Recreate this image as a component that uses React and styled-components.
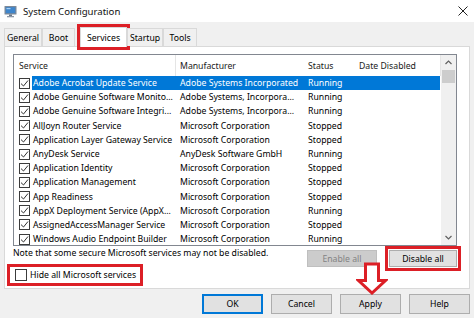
import React from "react";
import styled, { createGlobalStyle } from "styled-components";

const Global = createGlobalStyle`
  html, body { margin: 0; padding: 0; }
  body {
    width: 474px;
    height: 318px;
    overflow: hidden;
    background: #f0f0f0;
    font-family: "Noto Sans", "Open Sans", sans-serif;
  }
`;

const Window = styled.div`
  position: relative;
  width: 474px;
  height: 318px;
  background: #f0f0f0;
  color: #000;
  font-size: 8.7px;
  display: flex;
  flex-direction: column;
`;

const TitleBar = styled.div`
  height: 22px;
  background: #fff;
  display: flex;
  align-items: center;
  padding: 0 6px 0 4px;
  gap: 6px;
`;

const Title = styled.div`
  flex: 1;
  font-size: 9.6px;
  color: #111;
`;

const Body = styled.div`
  padding: 0 4px;
  display: flex;
  flex-direction: column;
`;

const TabStrip = styled.div`
  height: 24px;
  display: flex;
  align-items: flex-end;
  position: relative;
  z-index: 2;
`;

const Tab = styled.div`
  box-sizing: border-box;
  width: ${p => p.w}px;
  margin-left: ${p => p.ml || 0}px;
  height: ${p => (p.active ? 20 : 18)}px;
  margin-bottom: ${p => (p.active ? -1 : 0)}px;
  background: ${p => (p.active ? "#fff" : "#f0f0f0")};
  border: 1px solid #d9d9d9;
  border-bottom: none;
  display: flex;
  align-items: center;
  justify-content: center;
  padding-top: ${p => (p.active ? 0 : 1)}px;
  outline: ${p => (p.active ? "3px solid #dc1f26" : "none")};
`;

const Panel = styled.div`
  box-sizing: border-box;
  width: 466px;
  background: #fff;
  border: 1px solid #d9d9d9;
  padding: 7px 12px 5px 8px;
  display: flex;
  flex-direction: column;
`;

const ListBox = styled.div`
  box-sizing: border-box;
  width: 444px;
  height: 192px;
  border: 1px solid #828790;
  display: flex;
`;

const Table = styled.div`
  flex: 1;
  display: flex;
  flex-direction: column;
  overflow: hidden;
`;

const HeaderRow = styled.div`
  height: 21px;
  display: grid;
  grid-template-columns: 162px 129px 50px 86px;
`;

const HeaderCell = styled.div`
  display: flex;
  align-items: center;
  padding-left: ${p => p.pl}px;
  border-right: 1px solid ${p => (p.sep ? "#e5e5e5" : "transparent")};
  color: #1a1a1a;
`;

const Rows = styled.div`
  height: 169px;
  overflow: hidden;
`;

const Row = styled.div`
  height: 14.2px;
  display: flex;
  align-items: stretch;
`;

const CheckCell = styled.div`
  width: 18px;
  padding-left: 5px;
  box-sizing: border-box;
  display: flex;
  align-items: center;
`;

const RowBody = styled.div`
  width: 408px;
  display: grid;
  grid-template-columns: 144px 129px 50px 85px;
  background: ${p => (p.selected ? "#0078d7" : "transparent")};
  color: ${p => (p.selected ? "#fff" : "#000")};
`;

const Cell = styled.div`
  display: flex;
  align-items: center;
  padding-left: ${p => p.pl}px;
  white-space: nowrap;
  overflow: hidden;
`;

const Box = styled.div`
  box-sizing: border-box;
  width: ${p => p.size}px;
  height: ${p => p.size}px;
  border: 1px solid #3c3c3c;
  background: #fff;
  display: flex;
  align-items: center;
  justify-content: center;
  flex-shrink: 0;
`;

const ScrollBar = styled.div`
  width: 15px;
  background: #f0f0f0;
  display: flex;
  flex-direction: column;
`;

const ScrollArrow = styled.div`
  height: 15px;
  display: flex;
  align-items: center;
  justify-content: center;
`;

const Thumb = styled.div`
  height: 13px;
  margin: 0 1px;
  background: #cdcdcd;
`;

const Track = styled.div`
  flex: 1;
`;

const Footer = styled.div`
  display: flex;
  align-items: flex-start;
  margin-top: 1px;
`;

const Note = styled.div`
  flex: 1;
  line-height: 13px;
`;

const Button = styled.div`
  box-sizing: border-box;
  width: ${p => p.w}px;
  height: ${p => p.h}px;
  margin-left: ${p => p.ml || 0}px;
  margin-top: ${p => p.mt || 0}px;
  display: flex;
  align-items: center;
  justify-content: center;
  background: ${p => (p.disabled ? "#cccccc" : "#e1e1e1")};
  border: 1px solid ${p => (p.primary ? "#0078d7" : p.disabled ? "#bfbfbf" : "#adadad")};
  box-shadow: ${p => (p.primary ? "inset 0 0 0 1px #0078d7" : "none")};
  color: ${p => (p.disabled ? "#838383" : "#000")};
  outline: ${p => (p.marked ? "3px solid #dc1f26" : "none")};
  outline-offset: 1px;
`;

const HideRow = styled.div`
  align-self: flex-start;
  height: 16px;
  margin-left: -3px;
  padding: 0 4px 0 5px;
  display: flex;
  align-items: center;
  gap: 3px;
  white-space: nowrap;
  outline: 3px solid #dc1f26;
  box-sizing: border-box;
`;

const ButtonBar = styled.div`
  display: flex;
  justify-content: flex-end;
  gap: 8px;
  margin-top: 5px;
`;

const Arrow = styled.svg`
  position: absolute;
  left: 356px;
  top: 262px;
`;

const services = [
  ["Adobe Acrobat Update Service", "Adobe Systems Incorporated", "Running"],
  ["Adobe Genuine Software Monito...", "Adobe Systems, Incorpora...", "Running"],
  ["Adobe Genuine Software Integri...", "Adobe Systems, Incorpora...", "Running"],
  ["AllJoyn Router Service", "Microsoft Corporation", "Stopped"],
  ["Application Layer Gateway Service", "Microsoft Corporation", "Stopped"],
  ["AnyDesk Service", "AnyDesk Software GmbH", "Running"],
  ["Application Identity", "Microsoft Corporation", "Stopped"],
  ["Application Management", "Microsoft Corporation", "Stopped"],
  ["App Readiness", "Microsoft Corporation", "Stopped"],
  ["AppX Deployment Service (AppX...", "Microsoft Corporation", "Running"],
  ["AssignedAccessManager Service", "Microsoft Corporation", "Stopped"],
  ["Windows Audio Endpoint Builder", "Microsoft Corporation", "Running"],
];

const Check = () => (
  <svg width="9" height="9" viewBox="0 0 9 9">
    <path d="M1 4.6 L3.5 7 L8 1.5" fill="none" stroke="#333" strokeWidth="1" />
  </svg>
);

const AppIcon = () => (
  <svg width="13" height="13" viewBox="0 0 13 13">
    <rect x="0.5" y="1" width="12" height="8.5" rx="0.5" fill="#7d8a99" />
    <rect x="1.7" y="2.2" width="9.6" height="6" fill="#3f86cc" />
    <rect x="2.5" y="3" width="4" height="1.2" fill="#a9d1f5" />
    <rect x="5" y="9.5" width="3" height="1.5" fill="#6b7787" />
    <rect x="3" y="11" width="7" height="1.3" fill="#8d98a6" />
  </svg>
);

const CloseIcon = () => (
  <svg width="10" height="10" viewBox="0 0 10 10">
    <path d="M0.5 0.5 L9.5 9.5 M9.5 0.5 L0.5 9.5" stroke="#222" strokeWidth="1" />
  </svg>
);

const Chevron = ({ up }) => (
  <svg width="7" height="5" viewBox="0 0 7 5">
    <path d={up ? "M0.5 4 L3.5 1 L6.5 4" : "M0.5 1 L3.5 4 L6.5 1"} fill="none" stroke="#606060" strokeWidth="1.2" />
  </svg>
);

export default function App() {
  return (
    <Window>
      <Global />
      <TitleBar>
        <AppIcon />
        <Title>System Configuration</Title>
        <CloseIcon />
      </TitleBar>
      <Body>
        <TabStrip>
          <Tab w={38}>General</Tab>
          <Tab w={33}>Boot</Tab>
          <Tab w={47} ml={5} active>Services</Tab>
          <Tab w={36}>Startup</Tab>
          <Tab w={34}>Tools</Tab>
        </TabStrip>
        <Panel>
          <ListBox>
            <Table>
              <HeaderRow>
                <HeaderCell pl={5} sep>Service</HeaderCell>
                <HeaderCell pl={4}>Manufacturer</HeaderCell>
                <HeaderCell pl={3}>Status</HeaderCell>
                <HeaderCell pl={4} sep>Date Disabled</HeaderCell>
              </HeaderRow>
              <Rows>
                {services.map(([name, maker, status], i) => (
                  <Row key={name}>
                    <CheckCell>
                      <Box size={11}><Check /></Box>
                    </CheckCell>
                    <RowBody selected={i === 0}>
                      <Cell pl={1}>{name}</Cell>
                      <Cell pl={4}>{maker}</Cell>
                      <Cell pl={3}>{status}</Cell>
                      <Cell pl={4}></Cell>
                    </RowBody>
                  </Row>
                ))}
              </Rows>
            </Table>
            <ScrollBar>
              <ScrollArrow><Chevron up /></ScrollArrow>
              <Thumb />
              <Track />
              <ScrollArrow><Chevron /></ScrollArrow>
            </ScrollBar>
          </ListBox>
          <Footer>
            <Note>Note that some secure Microsoft services may not be disabled.</Note>
            <Button w={70} h={17} mt={3} disabled>Enable all</Button>
            <Button w={68} h={17} mt={3} ml={12} marked>Disable all</Button>
          </Footer>
          <HideRow>
            <Box size={12} />
            <span>Hide all Microsoft services</span>
          </HideRow>
        </Panel>
        <ButtonBar>
          <Button w={61} h={20} primary>OK</Button>
          <Button w={61} h={20}>Cancel</Button>
          <Button w={61} h={20}>Apply</Button>
          <Button w={61} h={20}>Help</Button>
        </ButtonBar>
      </Body>
      <Arrow width="32" height="33" viewBox="0 0 32 33">
        <path d="M9.5 2 H22.5 V18.5 H29.5 L16 31 L2.5 18.5 H9.5 Z" fill="#fff" stroke="#dc1f26" strokeWidth="3" strokeLinejoin="miter" />
      </Arrow>
    </Window>
  );
}
